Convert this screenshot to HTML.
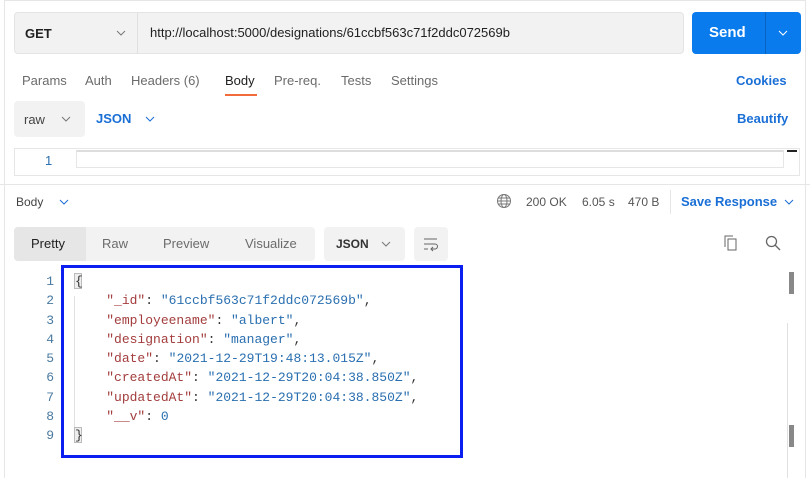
<!DOCTYPE html>
<html><head><style>
*{box-sizing:border-box;margin:0;padding:0}
body{width:810px;height:478px;background:#fff;font-family:"Liberation Sans",sans-serif;position:relative;overflow:hidden;color:#212121}
.a{position:absolute}
.frame{left:4px;top:0;width:802px;height:478px;border-left:1px solid #e6e6e6;border-right:1px solid #e6e6e6;border-top:1px solid #e6e6e6}
.t{font-size:13px;color:#6b6b6b}
.code{font-family:"Liberation Mono",monospace;font-size:13px;white-space:pre;line-height:19.3px}
.k{color:#a33d3d}.v{color:#2a6fb0}.n{color:#2a6fb0}
.chev{font-size:10px;color:#777}
</style></head><body>
<div class="a frame"></div>
<!-- URL bar -->
<div class="a" style="left:14px;top:12px;width:670px;height:42px;background:#f2f2f2;border:1px solid #e4e4e4;border-radius:4px"></div>
<div class="a" style="left:137px;top:13px;width:1px;height:40px;background:#e0e0e0"></div>
<div class="a" style="left:25px;top:26px;font-size:13px;font-weight:bold;color:#212121">GET</div>
<svg class="a" style="left:116px;top:29px" width="10" height="8"><path d="M1 2l4 4 4-4" stroke="#777" fill="none"/></svg>
<div class="a" style="left:150px;top:25px;font-size:13px;color:#212121">http://localhost:5000/designations/61ccbf563c71f2ddc072569b</div>
<div class="a" style="left:692px;top:12px;width:109px;height:42px;background:#097bed;border-radius:4px"></div>
<div class="a" style="left:765px;top:12px;width:1px;height:42px;background:#0a63c0"></div>
<div class="a" style="left:709px;top:24px;font-size:15px;font-weight:bold;color:#fff">Send</div>
<svg class="a" style="left:778px;top:29px" width="10" height="8"><path d="M1 2l4 4 4-4" stroke="#fff" fill="none"/></svg>
<!-- tabs -->
<div class="a t" style="left:22px;top:73px">Params</div>
<div class="a t" style="left:85px;top:73px">Auth</div>
<div class="a t" style="left:131px;top:73px">Headers (6)</div>
<div class="a t" style="left:225px;top:73px;color:#212121">Body</div>
<div class="a" style="left:225px;top:94px;width:32px;height:2px;background:#f26b3a"></div>
<div class="a t" style="left:274px;top:73px">Pre-req.</div>
<div class="a t" style="left:341px;top:73px">Tests</div>
<div class="a t" style="left:391px;top:73px">Settings</div>
<div class="a" style="left:736px;top:73px;font-size:13px;font-weight:bold;color:#1a6fd6">Cookies</div>
<div class="a" style="left:14px;top:101px;width:71px;height:36px;background:#f2f2f2;border-radius:4px"></div>
<div class="a" style="left:24px;top:112px;font-size:13px;color:#444">raw</div>
<svg class="a" style="left:61px;top:115px" width="10" height="8"><path d="M1 2l4 4 4-4" stroke="#777" fill="none"/></svg>
<div class="a" style="left:96px;top:111px;font-size:13px;font-weight:bold;color:#1a6fd6">JSON</div>
<svg class="a" style="left:145px;top:115px" width="10" height="8"><path d="M1 2l4 4 4-4" stroke="#1a6fd6" fill="none"/></svg>
<div class="a" style="left:737px;top:111px;font-size:13px;font-weight:bold;color:#1a6fd6">Beautify</div>
<!-- request editor -->
<div class="a" style="left:14px;top:148px;width:786px;height:28px;border:1px solid #e6e6e6"></div>
<div class="a" style="left:76px;top:150px;width:708px;height:18px;border:1px solid #e6e6e6;border-top:2px solid #ddd"></div>
<div class="a" style="left:45px;top:153px;font-size:13px;color:#2a6fb0">1</div>
<div class="a" style="left:787px;top:150px;width:10px;height:2px;background:#222"></div>
<div class="a" style="left:0;top:184px;width:810px;height:1px;background:#e6e6e6"></div>
<!-- response header -->
<div class="a" style="left:16px;top:195px;font-size:12px;color:#444">Body</div>
<svg class="a" style="left:59px;top:198px" width="10" height="8"><path d="M1 2l4 4 4-4" stroke="#1a6fd6" fill="none"/></svg>
<svg class="a" style="left:496px;top:193px" width="16" height="16"><circle cx="8" cy="8" r="6.5" stroke="#777" fill="none"/><ellipse cx="8" cy="8" rx="3" ry="6.5" stroke="#777" fill="none"/><path d="M1.5 8h13M2.5 5h11M2.5 11h11" stroke="#777"/></svg>
<div class="a" style="left:526px;top:195px;font-size:12px;color:#555">200 OK</div>
<div class="a" style="left:582px;top:195px;font-size:12px;color:#555">6.05 s</div>
<div class="a" style="left:628px;top:195px;font-size:12px;color:#555">470 B</div>
<div class="a" style="left:670px;top:190px;width:1px;height:24px;background:#e6e6e6"></div>
<div class="a" style="left:681px;top:194px;font-size:13px;color:#1a6fd6;font-weight:bold">Save Response</div>
<svg class="a" style="left:784px;top:198px" width="10" height="8"><path d="M1 2l4 4 4-4" stroke="#1a6fd6" fill="none"/></svg>
<!-- pretty toolbar -->
<div class="a" style="left:14px;top:227px;width:301px;height:34px;background:#f2f2f2;border-radius:4px"></div>
<div class="a" style="left:14px;top:227px;width:72px;height:34px;background:#e6e6e6;border-radius:4px 0 0 4px"></div>
<div class="a" style="left:31px;top:236px;font-size:13px;color:#212121">Pretty</div>
<div class="a t" style="left:102px;top:236px">Raw</div>
<div class="a t" style="left:163px;top:236px">Preview</div>
<div class="a t" style="left:245px;top:236px">Visualize</div>
<div class="a" style="left:324px;top:227px;width:81px;height:34px;background:#f2f2f2;border-radius:4px"></div>
<div class="a" style="left:336px;top:237px;font-size:12px;color:#333;font-weight:bold">JSON</div>
<svg class="a" style="left:381px;top:240px" width="10" height="8"><path d="M1 2l4 4 4-4" stroke="#777" fill="none"/></svg>
<div class="a" style="left:414px;top:227px;width:34px;height:34px;background:#f2f2f2;border-radius:4px"></div>
<svg class="a" style="left:422px;top:236px" width="18" height="16"><path d="M2 3h13M2 8h11a2.5 2.5 0 0 1 0 5h-4M11 11l-2 2 2 2M2 13h4" stroke="#666" fill="none"/></svg>
<svg class="a" style="left:723px;top:234px" width="16" height="18"><rect x="5" y="5" width="8" height="11" stroke="#666" fill="none"/><path d="M2 13V2h8" stroke="#666" fill="none"/></svg>
<svg class="a" style="left:765px;top:235px" width="16" height="16"><circle cx="6.5" cy="6.5" r="5" stroke="#666" fill="none" stroke-width="1.3"/><path d="M10 10l5 5" stroke="#666" stroke-width="1.3"/></svg>
<!-- code -->
<div class="a code" style="left:38px;top:272px;width:16px;text-align:right;color:#4a7aa0">1
2
3
4
5
6
7
8
9</div>
<div class="a" style="left:74px;top:296px;width:1px;height:134px;background:#e0e0e0"></div>
<div class="a" style="left:74px;top:273px;width:8px;height:16px;border:1px solid #bbb;background:#eee"></div>
<div class="a" style="left:74px;top:427px;width:8px;height:16px;border:1px solid #bbb;background:#eee"></div>
<div class="a code" style="left:75px;top:272px;color:#333">{
    <span class="k">"_id"</span>: <span class="v">"61ccbf563c71f2ddc072569b"</span>,
    <span class="k">"employeename"</span>: <span class="v">"albert"</span>,
    <span class="k">"designation"</span>: <span class="v">"manager"</span>,
    <span class="k">"date"</span>: <span class="v">"2021-12-29T19:48:13.015Z"</span>,
    <span class="k">"createdAt"</span>: <span class="v">"2021-12-29T20:04:38.850Z"</span>,
    <span class="k">"updatedAt"</span>: <span class="v">"2021-12-29T20:04:38.850Z"</span>,
    <span class="k">"__v"</span>: <span class="n">0</span>
}</div>
<div class="a" style="left:61px;top:265px;width:402px;height:193px;border:3px solid #0a1ff0"></div>
<div class="a" style="left:787px;top:323px;width:1px;height:155px;background:#e0e0e0"></div>
<div class="a" style="left:789px;top:272px;width:5px;height:22px;background:#888"></div>
<div class="a" style="left:789px;top:425px;width:5px;height:22px;background:#888"></div>
</body></html>
